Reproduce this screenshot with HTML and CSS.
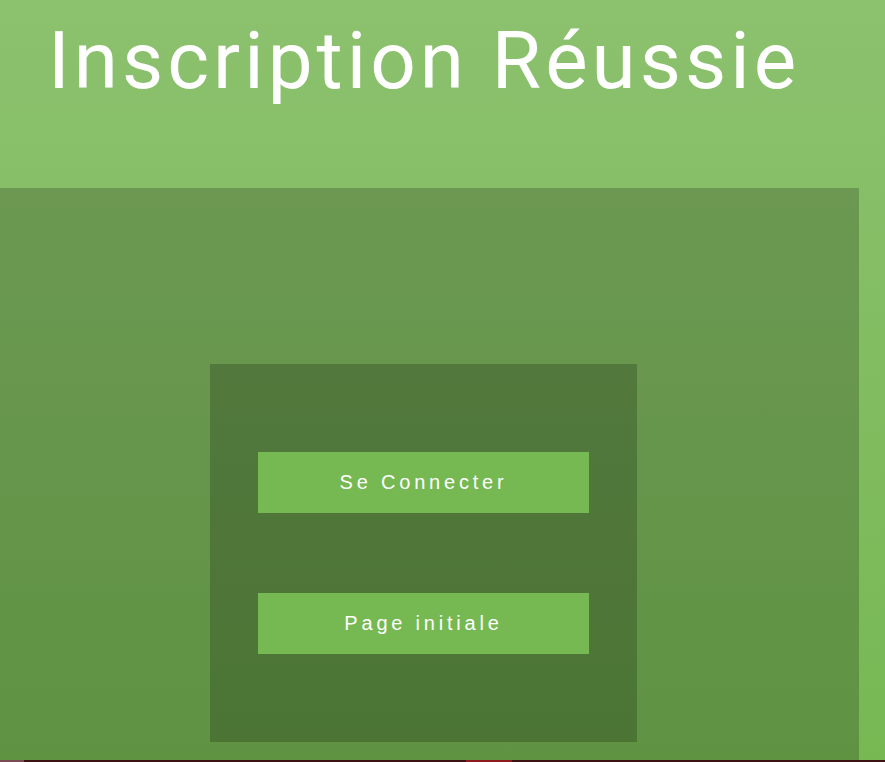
FILE: index.html
```html
<!DOCTYPE html>
<html lang="fr">
<head>
<meta charset="utf-8">
<title>Inscription Réussie</title>
<link rel="stylesheet" href="styles.css">
</head>
<body>
<div class="page">
  <header class="header">
    <h1 class="title">Inscription Réussie</h1>
  </header>
  <main class="main">
    <div class="card">
      <button class="btn" type="button">Se Connecter</button>
      <button class="btn" type="button">Page initiale</button>
    </div>
  </main>
  <footer class="footer">
    <span class="foot-a"></span>
    <span class="foot-b"></span>
  </footer>
</div>
</body>
</html>
```

FILE: styles.css
```css
html, body {
  margin: 0;
  padding: 0;
}
body {
  width: 885px;
  height: 762px;
  overflow: hidden;
  background: linear-gradient(to bottom, #8cc16e 0%, #77b853 100%);
}
.page {
  display: flex;
  flex-direction: column;
}
.header {
  height: 188px;
  box-sizing: border-box;
  padding: 14px 0 0 48px;
}
.title {
  margin: 0;
  font-family: Roboto, "Noto Sans", sans-serif;
  font-weight: 400;
  font-size: 80px;
  line-height: 94px;
  letter-spacing: 4px;
  color: #ffffff;
}
.main {
  width: 859px;
  height: 572px;
  box-sizing: border-box;
  background: rgba(0, 0, 0, 0.2);
  padding: 176px 0 0 210px;
}
.card {
  width: 427px;
  height: 378px;
  box-sizing: border-box;
  background: rgba(0, 0, 0, 0.2);
  padding: 88px 48px;
  display: flex;
  flex-direction: column;
  gap: 80px;
}
.btn {
  height: 61px;
  width: 100%;
  border: 0;
  margin: 0;
  background: #76b852;
  color: #ffffff;
  font-family: "Liberation Sans", Arial, sans-serif;
  font-size: 20px;
  letter-spacing: 3.8px;
  padding: 0;
}
.footer {
  height: 2px;
  background: #3d1212;
  display: flex;
}
.foot-a {
  width: 24px;
  background: #7a4b52;
}
.foot-b {
  width: 46px;
  margin-left: 442px;
  background: #8e1a1e;
}
```
